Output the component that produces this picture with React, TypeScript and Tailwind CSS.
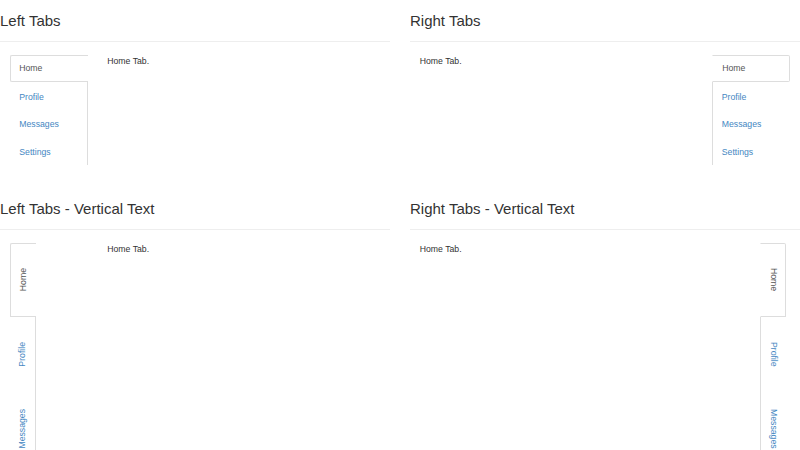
import React from "react";

const TABS = ["Home", "Profile", "Messages", "Settings"];
const LINK = "text-[#4587c2]";

function Heading({ title }: { title: string }) {
  return (
    <>
      <h3 className="text-[15px] leading-[16px] font-normal text-[#333]">{title}</h3>
      <div className="mt-[12px] h-px bg-[#eee]" />
    </>
  );
}

function Content() {
  return <div className="text-[8.7px] leading-[12.3px] text-[#333]">Home Tab.</div>;
}

function LeftTabs() {
  return (
    <ul className="border-r border-[#ddd] h-[110px]">
      {TABS.map((t, i) =>
        i === 0 ? (
          <li
            key={t}
            className="-mr-px h-[26.5px] mb-px flex items-center pl-[8.5px] pt-px border border-r-0 border-[#ddd] rounded-l-[2px] bg-white text-[#555] text-[8.7px]"
          >
            {t}
          </li>
        ) : (
          <li key={t} className={`h-[27.5px] flex items-center pl-[9.5px] pt-[2px] ${LINK} text-[8.7px]`}>
            {t}
          </li>
        )
      )}
    </ul>
  );
}

function RightTabs() {
  return (
    <ul className="border-l border-[#ddd] h-[110px]">
      {TABS.map((t, i) =>
        i === 0 ? (
          <li
            key={t}
            className="-ml-px h-[26.5px] mb-px flex items-center pl-[9px] pt-px border border-l-transparent border-[#ddd] rounded-r-[2px] bg-white text-[#555] text-[8.7px]"
          >
            {t}
          </li>
        ) : (
          <li key={t} className={`h-[27.5px] flex items-center pl-[8.5px] pt-[2px] ${LINK} text-[8.7px]`}>
            {t}
          </li>
        )
      )}
    </ul>
  );
}

function LeftVertical() {
  return (
    <ul className="w-[26px] border-r border-[#ddd]">
      {TABS.map((t, i) =>
        i === 0 ? (
          <li
            key={t}
            className="-mr-px h-[74px] flex items-center justify-center border border-r-0 border-[#ddd] rounded-tl-[2px] bg-white text-[#555] text-[8.7px]"
          >
            <span className="[writing-mode:vertical-rl] rotate-180">{t}</span>
          </li>
        ) : (
          <li key={t} className={`h-[74px] pt-px flex items-center justify-center ${LINK} text-[8.7px]`}>
            <span className="[writing-mode:vertical-rl] rotate-180">{t}</span>
          </li>
        )
      )}
    </ul>
  );
}

function RightVertical() {
  return (
    <ul className="ml-[47.75px] w-[26px] border-l border-[#ddd]">
      {TABS.map((t, i) =>
        i === 0 ? (
          <li
            key={t}
            className="-ml-px h-[74px] flex items-center justify-center border border-l-transparent border-[#ddd] rounded-tr-[2px] bg-white text-[#555] text-[8.7px]"
          >
            <span className="[writing-mode:vertical-rl]">{t}</span>
          </li>
        ) : (
          <li key={t} className={`h-[74px] pt-px flex items-center justify-center ${LINK} text-[8.7px]`}>
            <span className="[writing-mode:vertical-rl]">{t}</span>
          </li>
        )
      )}
    </ul>
  );
}

export default function App() {
  return (
    <div className="w-[800px] bg-white font-['Liberation_Sans',Arial,sans-serif]">
      <div className="grid grid-cols-[390px_390px] gap-x-[20px]">
        <section className="pt-[13px]">
          <Heading title="Left Tabs" />
          <div className="mt-[13px] grid grid-cols-[97.5px_292.5px]">
            <div className="px-[9.75px]">
              <LeftTabs />
            </div>
            <div className="px-[9.75px]">
              <Content />
            </div>
          </div>
        </section>
        <section className="pt-[13px]">
          <Heading title="Right Tabs" />
          <div className="mt-[13px] grid grid-cols-[292.5px_97.5px]">
            <div className="px-[9.75px]">
              <Content />
            </div>
            <div className="px-[9.75px]">
              <RightTabs />
            </div>
          </div>
        </section>
        <section className="mt-[23px] pt-[13px]">
          <Heading title="Left Tabs - Vertical Text" />
          <div className="mt-[13px] grid grid-cols-[97.5px_292.5px]">
            <div className="px-[9.75px]">
              <LeftVertical />
            </div>
            <div className="px-[9.75px]">
              <Content />
            </div>
          </div>
        </section>
        <section className="mt-[23px] pt-[13px]">
          <Heading title="Right Tabs - Vertical Text" />
          <div className="mt-[13px] grid grid-cols-[292.5px_97.5px]">
            <div className="px-[9.75px]">
              <Content />
            </div>
            <div className="px-[9.75px]">
              <RightVertical />
            </div>
          </div>
        </section>
      </div>
    </div>
  );
}
